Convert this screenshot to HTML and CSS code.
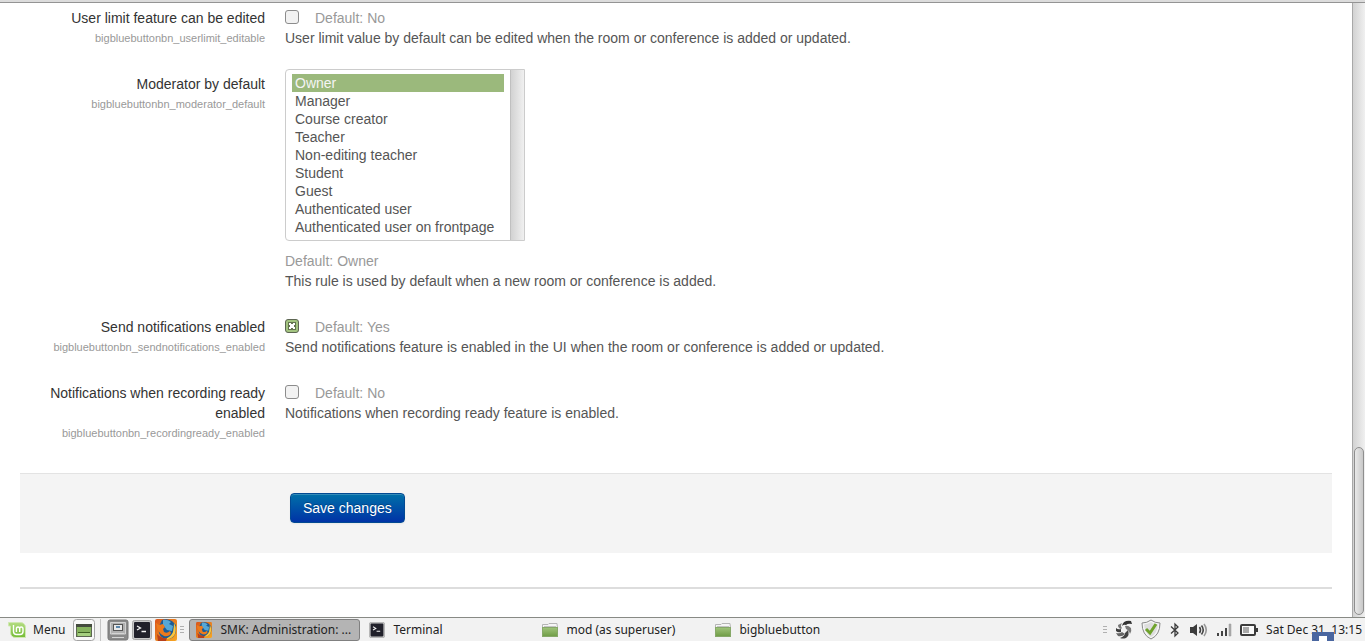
FILE: index.html
```html
<!DOCTYPE html>
<html lang="en">
<head>
<meta charset="UTF-8">
<meta name="viewport" content="width=device-width, initial-scale=1.0">
<title>SMK: Administration: Plugins: BigBlueButtonBN</title>
<link rel="stylesheet" href="styles.css">
</head>
<body>

<!-- shared icons -->
<svg class="defs" aria-hidden="true">
  <defs>
    <linearGradient id="folderGreen" x1="0" y1="0" x2="0" y2="1">
      <stop offset="0" stop-color="#9fc47a"/>
      <stop offset="1" stop-color="#6f9c45"/>
    </linearGradient>
    <linearGradient id="mintGreen" x1="0" y1="0" x2="0" y2="1">
      <stop offset="0" stop-color="#b4dc82"/>
      <stop offset="1" stop-color="#74bc35"/>
    </linearGradient>
    <linearGradient id="foxOrange" x1="0" y1="0" x2="1" y2="1">
      <stop offset="0" stop-color="#d9541a"/>
      <stop offset="1" stop-color="#f7a823"/>
    </linearGradient>
    <symbol id="firefox" viewBox="0 0 22 22">
      <rect width="22" height="22" rx="2" fill="url(#foxOrange)"/>
      <path d="M7 1 Q12-1 17 2 L21 6 21 12 Q20 19 13 20 Q6 20 4 14 Q3 7 7 1Z" fill="#1d5b94"/>
      <path d="M8 1 Q12 0 16 3 L14 5 18 7 17 12 12 11 8 6Z" fill="#55a7d6"/>
      <path d="M1 4 L4 6 8 5 10 8 8 10 9 13 Q12 15 15 12 L16 14 Q14 18 9 17 Q2 14 1 4Z" fill="#ec7a1c"/>
      <path d="M19 4 Q22 9 20 15 Q17 21 10 20 Q16 18 18 13 Q19 8 19 4Z" fill="#fbc63c"/>
      <path d="M2 15 Q7 20 12 19 L11 22 H3Z" fill="#b8401b"/>
    </symbol>
    <symbol id="terminal" viewBox="0 0 20 20">
      <rect x=".5" y=".5" width="19" height="19" rx="2" fill="#c9c9c9" stroke="#a9a9a9"/>
      <rect x="2" y="2" width="16" height="16" rx="1" fill="#21212b"/>
      <path d="M5 6 L8.500 8 5 10 M9.500 11.500 H14" fill="none" stroke="#f4f4f4" stroke-width="1.300"/>
    </symbol>
    <symbol id="folder" viewBox="0 0 16 14">
      <path d="M.5 5 V1.500 H6 L7 .5 H15 L15.500 5" fill="#f5f5f5" stroke="#b5b5b5"/>
      <path d="M2 3.500 H14" stroke="#c4c4c4"/>
      <rect x=".5" y="4.500" width="15" height="9" fill="url(#folderGreen)" stroke="#86a868"/>
    </symbol>
  </defs>
</svg>

<div class="toolbar-edge"></div>

<div class="browser">
  <main class="page">
    <form class="settings" onsubmit="return false">

      <div class="form-item">
        <div class="form-label">
          <label for="userlimit">User limit feature can be edited</label>
          <span class="form-shortname">bigbluebuttonbn_userlimit_editable</span>
        </div>
        <div class="form-setting">
          <div class="form-checkbox">
            <input type="checkbox" id="userlimit">
            <span class="form-default">Default: No</span>
          </div>
          <p>User limit value by default can be edited when the room or conference is added or updated.</p>
        </div>
      </div>

      <div class="form-item">
        <div class="form-label">
          <label for="moderator">Moderator by default</label>
          <span class="form-shortname">bigbluebuttonbn_moderator_default</span>
        </div>
        <div class="form-setting">
          <select id="moderator" class="form-select" size="9" multiple>
            <option selected>Owner</option>
            <option>Manager</option>
            <option>Course creator</option>
            <option>Teacher</option>
            <option>Non-editing teacher</option>
            <option>Student</option>
            <option>Guest</option>
            <option>Authenticated user</option>
            <option>Authenticated user on frontpage</option>
          </select>
          <div class="form-default">Default: Owner</div>
          <p>This rule is used by default when a new room or conference is added.</p>
        </div>
      </div>

      <div class="form-item">
        <div class="form-label">
          <label for="sendnotifications">Send notifications enabled</label>
          <span class="form-shortname">bigbluebuttonbn_sendnotifications_enabled</span>
        </div>
        <div class="form-setting">
          <div class="form-checkbox">
            <input type="checkbox" id="sendnotifications" checked>
            <span class="form-default">Default: Yes</span>
          </div>
          <p>Send notifications feature is enabled in the UI when the room or conference is added or updated.</p>
        </div>
      </div>

      <div class="form-item">
        <div class="form-label">
          <label for="recordingready">Notifications when recording ready enabled</label>
          <span class="form-shortname">bigbluebuttonbn_recordingready_enabled</span>
        </div>
        <div class="form-setting">
          <div class="form-checkbox">
            <input type="checkbox" id="recordingready">
            <span class="form-default">Default: No</span>
          </div>
          <p>Notifications when recording ready feature is enabled.</p>
        </div>
      </div>

      <div class="form-buttons">
        <button type="submit" class="btn-save">Save changes</button>
      </div>
    </form>
    <hr>
  </main>
  <div class="scrollbar"><div class="scroll-thumb"></div></div>
</div>

<footer class="taskbar">
  <button class="menu">
    <svg width="18" height="18" viewBox="0 0 18 18">
      <path d="M.5 1.500 H12 Q17.500 1.500 17.500 7 V16.500 H8 Q2.500 16.500 2.500 11 V5 H.5Z" fill="url(#mintGreen)" stroke="#cfe8b0"/>
      <path d="M5.500 4 V10.500 Q5.500 13.500 8.500 13.500 H12 Q15 13.500 15 10.500 V8 Q15 6 13.300 6 T11.700 8 V11 M11.700 8 Q11.700 6 10 6 T8.400 8 V11" fill="none" stroke="#fff" stroke-width="1.400"/>
    </svg>
    Menu
  </button>
  <button class="launcher show-desktop" aria-label="Show desktop">
    <svg width="22" height="22" viewBox="0 0 22 22">
      <rect x=".5" y=".5" width="21" height="21" rx="3" fill="#f8f8f8" stroke="#a3a3a3"/>
      <rect x="3.500" y="5.500" width="15" height="12" fill="#86b35f" stroke="#5c6652"/>
      <rect x="3" y="5" width="16" height="3" fill="#444b3e"/>
      <path d="M5 13.500 H17" stroke="#3f6124"/>
      <rect x="5" y="14" width="12" height="3" fill="#a5cf80"/>
    </svg>
  </button>
  <span class="divider"></span>
  <button class="launcher" aria-label="Files">
    <svg width="22" height="22" viewBox="0 0 22 22">
      <rect x="1" y="1" width="20" height="20" rx="2" fill="#8a8a8a" stroke="#777"/>
      <path d="M3.500 3.500 H18.500 V15 H3.500Z" fill="#b0b0b0" stroke="#d2d2d2"/>
      <rect x="6.500" y="5.500" width="9" height="6" fill="#e9e9e9" stroke="#555"/>
      <rect x="9" y="7" width="4" height="2" fill="#5d88ad"/>
      <path d="M5 14.500 H17 M5 18.500 H17" stroke="#d5d5d5"/>
    </svg>
  </button>
  <button class="launcher" aria-label="Terminal"><svg width="20" height="20"><use href="#terminal"/></svg></button>
  <button class="launcher" aria-label="Firefox"><svg width="22" height="22"><use href="#firefox"/></svg></button>
  <span class="grip"></span>

  <nav class="windows">
    <button class="window active"><svg width="16" height="16"><use href="#firefox"/></svg><span>SMK: Administration: ...</span></button>
    <button class="window"><svg width="16" height="16"><use href="#terminal"/></svg><span>Terminal</span></button>
    <button class="window"><svg width="16" height="14"><use href="#folder"/></svg><span>mod (as superuser)</span></button>
    <button class="window"><svg width="16" height="14"><use href="#folder"/></svg><span>bigbluebutton</span></button>
  </nav>

  <div class="tray">
    <span class="grip"></span>
    <svg width="18" height="20" viewBox="0 0 18 20">
      <path d="M16 1 Q8 0 7 6 Q9 4 11 5 Q13 3 17 4Z" fill="#333"/>
      <path d="M10 6 Q13 5 16 8 Q17 11 15 14 Q14 10 11 9Z" fill="#777"/>
      <path d="M13 10 Q15 15 11 18 Q8 19 5 18 Q10 16 10 13Z" fill="#444"/>
      <path d="M10 14 Q7 17 3 16 L1 13 Q5 14 7 12Z" fill="#666"/>
      <path d="M6 12 Q3 13 1 11 L1 8 Q3 10 6 9Z" fill="#3d3d3d"/>
      <path d="M6 9 Q3 8 3 5 L7 3 Q5 6 7 8Z" fill="#777"/>
    </svg>
    <svg width="20" height="21" viewBox="0 0 20 21">
      <path d="M10 1 Q14 4 19 4 Q19 16 10 20 Q1 16 1 4 Q6 4 10 1Z" fill="#f5f5f5" stroke="#8a8a8a"/>
      <path d="M10 3 Q13 5 17 5.500 Q16 15 10 18 Q4 15 3 5.500 Q7 5 10 3Z" fill="#dedede"/>
      <path d="M5 10 L9 14 15 5" fill="none" stroke="#6fa32c" stroke-width="3"/>
    </svg>
    <svg width="12" height="16" viewBox="0 0 12 16">
      <path d="M2 4.500 L9 11 6 14 V2 L9 5 2 11.500" fill="none" stroke="#3c3c3c" stroke-width="1.300"/>
    </svg>
    <svg width="19" height="16" viewBox="0 0 19 16">
      <path d="M1 5 H4 L8 2 V14 L4 11 H1Z" fill="#3c3c3c"/>
      <path d="M10.500 5 Q12.500 8 10.500 11 M12.500 3.500 Q16 8 12.500 12.500" fill="none" stroke="#444" stroke-width="1.600"/>
      <path d="M15 2 Q19.500 8 15 14" fill="none" stroke="#999" stroke-width="1.600"/>
    </svg>
    <svg width="16" height="14" viewBox="0 0 16 14">
      <path d="M1 10 H3 V13 H1Z M5 8 H7 V13 H5Z M9 5 H11 V13 H9Z" fill="#444"/>
      <path d="M13 1 H15 V13 H13Z" fill="#aaa" stroke="#999" stroke-width=".5"/>
    </svg>
    <svg width="18" height="14" viewBox="0 0 18 14">
      <rect x="1" y="2" width="14" height="10" rx="1" fill="#fafafa" stroke="#3c3c3c" stroke-width="2"/>
      <rect x="3" y="4" width="6" height="6" fill="#aaa"/>
      <rect x="16" y="5" width="2" height="4" fill="#3c3c3c"/>
    </svg>
    <time>Sat Dec 31, 13:15</time>
  </div>
  <!-- floating widget peeking in over the clock -->
  <div class="floating-widget"><i></i></div>
</footer>

</body>
</html>
```
FILE: styles.css
```css
* {
  box-sizing: border-box;
}
body {
  margin: 0;
  height: 100vh;
  display: flex;
  flex-direction: column;
  overflow: hidden;
  background: #fff;
  color: #555;
  font-family: "Liberation Sans", Arial, sans-serif;
  font-size: 14px;
  line-height: 20px;
}
button {
  font: inherit;
  color: inherit;
  border: none;
  background: none;
  padding: 0;
}
p {
  margin: 0;
}
svg {
  display: block;
  flex: none;
}
.defs {
  position: absolute;
  width: 0;
  height: 0;
}
.toolbar-edge {
  flex: none;
  height: 3px;
  background: #dcdcdc;
  border-bottom: 1px solid #949494;
}

/* page */
.browser {
  flex: 1;
  min-height: 0;
  display: flex;
}
.page {
  flex: 1;
  min-width: 0;
  overflow: hidden;
  padding: 5px 20px 0;
}
.form-item {
  display: flex;
  gap: 20px;
  margin-bottom: 26px;
}
.form-label {
  flex: none;
  width: 245px;
  padding-left: 20px;
  text-align: right;
  color: #333;
}
.form-label label,
.form-shortname {
  display: block;
}
.form-shortname {
  font-size: 11px;
  color: #999;
}
.form-setting {
  flex: 1;
}
.form-checkbox {
  display: flex;
  gap: 16px;
}
.form-default {
  color: #999;
}
input[type="checkbox"] {
  appearance: none;
  width: 14px;
  height: 14px;
  margin: 2px 0 0;
  border: 1px solid #8c8c8c;
  border-radius: 3px;
  background: #f2f2f2;
}
input[type="checkbox"]:checked {
  border-color: #5d6653;
  background:
    linear-gradient(45deg, transparent 38%, #fff 38%, #fff 62%, transparent 62%) center / 6px 6px no-repeat,
    linear-gradient(-45deg, transparent 38%, #fff 38%, #fff 62%, transparent 62%) center / 6px 6px no-repeat,
    linear-gradient(#63744f, #63744f) center / 8px 8px no-repeat,
    #a3c480;
}
.form-select {
  display: block;
  width: 240px;
  margin: -5px 0 10px;
  padding: 4px 20px 4px 6px;
  border: 1px solid #ccc;
  border-radius: 4px 0 0 4px;
  /* scroll track on the right */
  background: linear-gradient(to right, #c0c0c0 1px, #d2d2d2 1px, #f0f0f0) right / 14px 100% no-repeat #fff;
  color: #555;
  font: inherit;
  overflow: hidden;
  scrollbar-width: none;
  outline: none;
}
.form-select option {
  height: 18px;
  min-height: 18px;
  line-height: 18px;
  padding: 1px 3px 0;
}
.form-select option:checked {
  background: #9bb97c linear-gradient(#9bb97c, #9bb97c);
  color: #f4f4f4;
  -webkit-text-fill-color: #f4f4f4;
}
.form-buttons {
  height: 80px;
  margin-top: 30px;
  padding: 19px 20px 20px 270px;
  background: #f4f4f4;
  border-top: 1px solid #e3e3e3;
}
.btn-save {
  display: block;
  height: 30px;
  padding: 0 12px;
  border: 1px solid #024a93;
  border-radius: 4px;
  background: linear-gradient(#0070a8, #0033a6);
  box-shadow: inset 0 1px 0 rgba(255,255,255,0.2), 0 1px 2px rgba(0,0,0,0.05);
  color: #fff;
  text-shadow: 0 -1px 0 rgba(0,0,0,0.25);
}
hr {
  margin: 34px 0 0;
  border: none;
  height: 2px;
  background: #ddd;
}

/* browser scrollbar */
.scrollbar {
  flex: none;
  width: 13px;
  display: flex;
  flex-direction: column;
  justify-content: flex-end;
  padding: 0 1px 2px;
  border-left: 1px solid #a8a8a8;
  background: linear-gradient(to right, #d2d2d2, #f0f0f0);
}
.scroll-thumb {
  height: 168px;
  border: 1px solid #8e8e8e;
  border-radius: 5px;
  background: linear-gradient(to right, #e8e8e8, #c8c8c8);
}

/* desktop panel */
.taskbar {
  position: relative;
  flex: none;
  height: 24px;
  display: flex;
  align-items: center;
  padding: 0 3px 0 8px;
  border-top: 1px solid #888a85;
  background: #f2f2f2;
  color: #222;
  font-family: "Noto Sans", "Open Sans", sans-serif;
  font-size: 12px;
}
.menu {
  display: flex;
  align-items: center;
  gap: 7px;
}
.launcher {
  margin-right: 3px;
}
.show-desktop {
  margin: 0 5px 0 8px;
}
.divider {
  width: 1px;
  height: 22px;
  margin-right: 6px;
  background: #c4c4c4;
}
.grip {
  width: 4px;
  height: 8px;
  background: repeating-linear-gradient(#b0b0b0 0, #b0b0b0 1px, transparent 1px, transparent 3px);
}
.windows {
  flex: 1;
  min-width: 0;
  display: flex;
  gap: 2px;
  margin-left: 5px;
}
.window {
  flex: 0 1 171px;
  height: 22px;
  display: flex;
  align-items: center;
  gap: 8px;
  padding: 0 6px;
  border: 1px solid transparent;
  border-radius: 3px;
  white-space: nowrap;
}
.window.active {
  background: #b4b4b4;
  border-color: #808080;
}
.tray {
  display: flex;
  align-items: center;
  gap: 8px;
}
.tray time {
  white-space: nowrap;
}
.floating-widget {
  position: absolute;
  right: 31px;
  bottom: 0;
  width: 22px;
  height: 9px;
  padding: 4px 7px 0;
  background: #4a66a0;
}
.floating-widget i {
  display: block;
  height: 5px;
  background: #fff;
}
```
